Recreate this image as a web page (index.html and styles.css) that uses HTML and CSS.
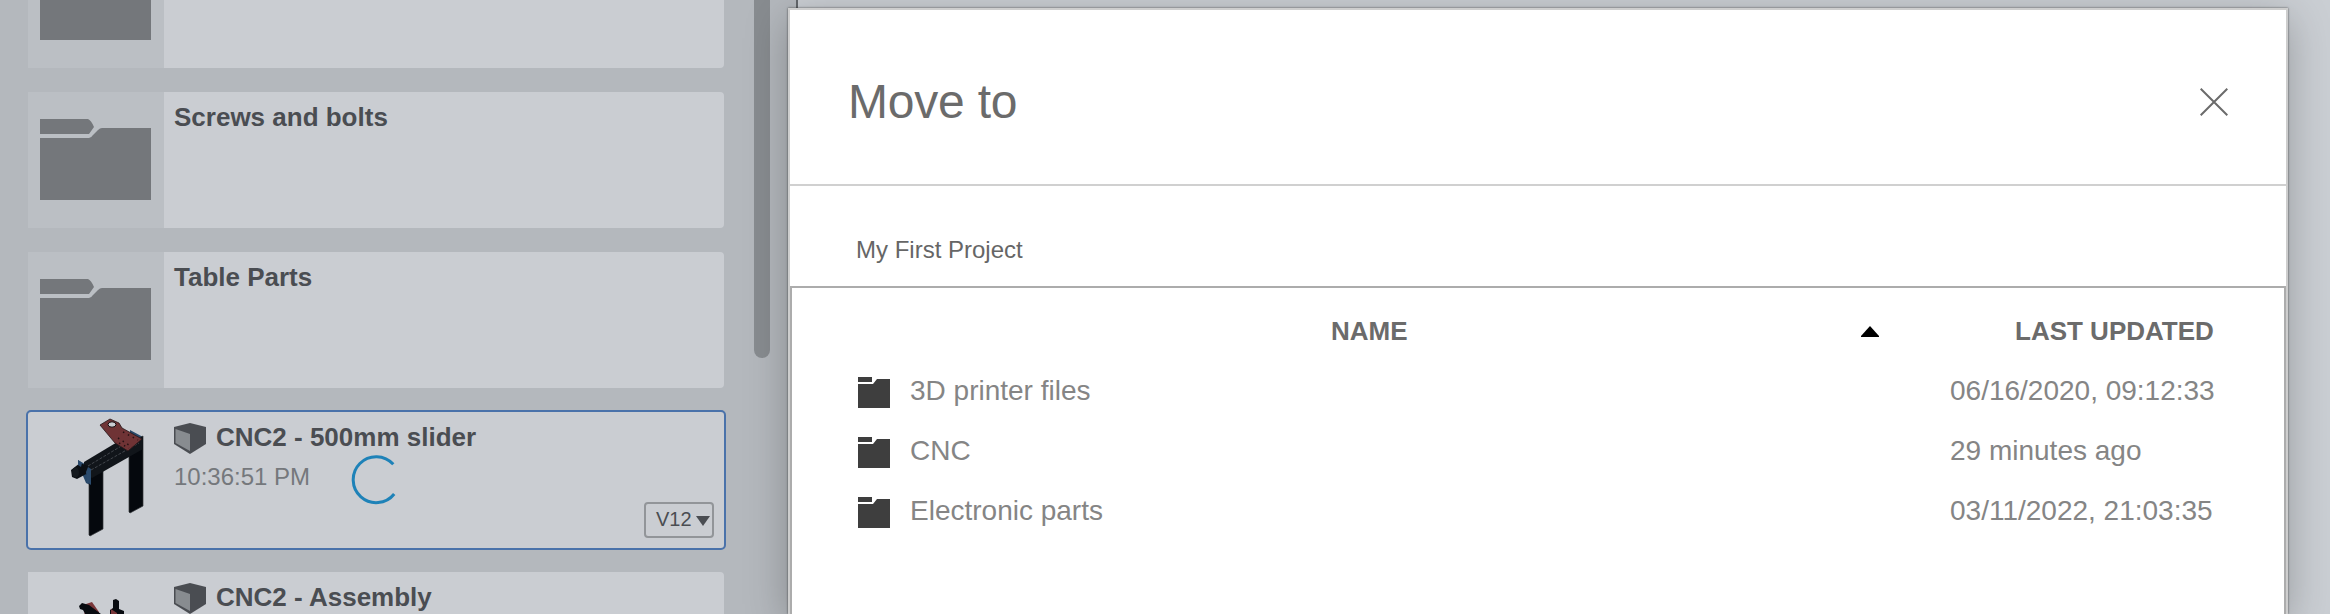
FILE: index.html
```html
<!DOCTYPE html>
<html lang="en">
<head>
<meta charset="utf-8">
<title>Move to</title>
<link rel="stylesheet" href="styles.css">
</head>
<body>
<svg class="defs" width="0" height="0">
  <symbol id="folder" viewBox="0 0 112 83"><path d="M0 1h48q3 1 6 8l-5 7H0zM0 20h49q2 0 4-3l5-5q2-2 4-2h49v72H0z"/></symbol>
  <symbol id="folder-sm" viewBox="0 0 32 32"><path d="M0 1h14v5H0zM0 8h15l4-5h13v29H0z"/></symbol>
  <symbol id="cube" viewBox="0 0 32 31"><path fill="#4a4d52" d="M0 4L16 0l16 4v17L16 31 0 21z"/><path fill="#888c90" d="M1.5 6L16 11v17L1.5 20z"/></symbol>
</svg>
<div class="app">
  <aside class="panel">
    <div class="list">
      <article class="card"><div class="thumb shade"><svg class="folder"><use href="#folder"/></svg></div><div class="info"></div></article>
      <article class="card"><div class="thumb shade"><svg class="folder"><use href="#folder"/></svg></div><div class="info"><h3>Screws and bolts</h3></div></article>
      <article class="card"><div class="thumb shade"><svg class="folder"><use href="#folder"/></svg></div><div class="info"><h3>Table Parts</h3></div></article>
      <article class="card selected">
        <div class="thumb">
          <svg width="136" height="136" viewBox="28 412 136 136">
            <path fill="#284869" d="M130 430l13 7v13l-13-8zM78 460l12 7v18l-4-2-8-19z"/>
            <path fill="#05080d" stroke="#303338" stroke-width=".7" d="M129 443l14-7v70l-13 7-1-1z"/>
            <path fill="#05080d" stroke="#303338" stroke-width=".7" d="M89 466l14-3v66l-13 7-1-1z"/>
            <path fill="#11151a" d="M84 462l35-21 24-3v11l-51 29-8-5z"/>
            <path stroke="#42464c" stroke-dasharray="3 1.5" fill="none" d="M91 470l48-27M88 466l35-21"/>
            <path fill="#0b0f14" d="M71 470l9-7 8 3v7l-11 6-5-2z"/>
            <ellipse cx="75.500" cy="472.500" rx="3.500" ry="5" fill="#14191e"/>
            <path fill="#2b4b6d" d="M78 460l4 3-1 4-3-2zM88 467l3 2v16l-4-3-1-10z"/>
            <path fill="#6f3335" stroke="#241719" stroke-width=".8" d="M100 425l10-6 9 4 3 5 20 11-14 12-13-8-5-6z"/>
            <ellipse cx="112" cy="424.500" rx="4" ry="2.700" fill="#c9cdd2" stroke="#180c0e"/>
            <path stroke="#261315" stroke-width="1.500" stroke-dasharray="1.500 4" d="M123 432l15 8M118 438l14 9M119 443l10 5"/>
          </svg>
        </div>
        <div class="info">
          <h3><svg class="cube"><use href="#cube"/></svg>CNC2 - 500mm slider</h3>
          <div class="meta"><span>10:36:51 PM</span><svg class="spinner" viewBox="0 0 50 50"><path d="M42.300 9.300A23 23 0 1 0 43.200 39"/></svg></div>
          <button class="version">V12<svg width="14" height="10"><path d="M0 0h14L7 10z"/></svg></button>
        </div>
      </article>
      <article class="card">
        <div class="thumb">
          <svg width="136" height="136" viewBox="28 572 136 136">
            <path fill="#7a373a" d="M86 604l6-2 7 10v4H84z"/>
            <path fill="#080b10" d="M79 606l3-3 7 2 12 9v5H88l-5-9-3-1zM113 600l3-1 3 2v8l5 2v7h-14v-8l3-2z"/>
            <path fill="#7a373a" d="M111 609l6 4v5h-6z"/>
          </svg>
        </div>
        <div class="info"><h3><svg class="cube"><use href="#cube"/></svg>CNC2 - Assembly</h3></div>
      </article>
    </div>
    <div class="scrollbar"></div>
  </aside>
  <main class="canvas"></main>
</div>
<section class="dialog" role="dialog">
  <header class="dialog-head"><h1>Move to</h1>
    <svg class="close" viewBox="0 0 28 28"><path d="M.7.700l26.600 26.600M27.300.700L.7 27.300"/></svg>
  </header>
  <div class="crumb">My First Project</div>
  <div class="table">
    <div class="row head"><div class="name">NAME<svg class="sort" width="18" height="11"><path d="M9 0l9 10v1H0v-1z"/></svg></div><div class="date">LAST UPDATED</div></div>
    <div class="row"><div class="file"><svg class="fi"><use href="#folder-sm"/></svg>3D printer files</div><div class="date">06/16/2020, 09:12:33</div></div>
    <div class="row"><div class="file"><svg class="fi"><use href="#folder-sm"/></svg>CNC</div><div class="date">29 minutes ago</div></div>
    <div class="row"><div class="file"><svg class="fi"><use href="#folder-sm"/></svg>Electronic parts</div><div class="date">03/11/2022, 21:03:35</div></div>
  </div>
</section>
</body>
</html>
```
FILE: styles.css
```css
* { box-sizing: border-box; }
html { height: 614px; overflow: hidden; }
body { margin: 0; width: 2330px; height: 614px; overflow: hidden; position: relative; font-family: "Liberation Sans", Arial, sans-serif; }
h1, h3 { margin: 0; }
.defs { position: absolute; }
.app { display: flex; height: 614px; overflow: hidden; background: #caced3; }
.panel { width: 798px; height: 614px; display: flex; background: #b4b8bd; border-right: 2px solid #63676b; overflow: hidden; }
.list { width: 754px; padding-left: 28px; margin-top: -68px; display: flex; flex-direction: column; gap: 24px; }
.card { width: 696px; height: 136px; flex: none; display: flex; background: #cacdd2; border-radius: 0 4px 4px 0; }
.card:last-child { height: 42px; overflow: hidden; border-radius: 0 4px 0 0; }
.card.selected { outline: 2px solid #4a72aa; border-radius: 3px; }
.thumb { width: 136px; height: 136px; flex: none; }
.thumb.shade { background: #bbbfc4; padding: 26px 12px; }
.thumb svg { display: block; }
.folder { width: 112px; height: 83px; fill: #74777b; }
.info { flex: 1; padding: 9px 10px 0; display: flex; flex-direction: column; align-items: flex-start; position: relative; }
.info h3 { display: flex; align-items: center; height: 32px; font-size: 26px; line-height: 32px; color: #4a4d52; white-space: nowrap; }
.cube { width: 32px; height: 31px; margin: 3px 10px 0 0; }
.meta { display: flex; align-items: flex-start; font-size: 24px; line-height: 28px; color: #75787c; padding-top: 10px; }
.spinner { width: 50px; height: 50px; margin: -8px 0 0 41px; fill: none; stroke: #1e82b8; stroke-width: 3; }
.version { position: absolute; right: 10px; bottom: 10px; width: 70px; height: 36px; border: 2px solid #929599; border-radius: 4px; background: none; padding: 0 2px 2px 10px; display: flex; align-items: center; justify-content: space-between; font: 20px "Liberation Sans", Arial, sans-serif; color: #4a4d52; }
.version svg { fill: #4a4d52; margin-top: 4px; }
.scrollbar { width: 16px; height: 358px; background: #888c90; border-radius: 0 0 8px 8px; }
.canvas { flex: 1; }
.dialog { position: absolute; left: 788px; top: 8px; width: 1500px; height: 606px; background: #fff; border: 2px solid #cecece; border-bottom: 0; display: flex; flex-direction: column; box-shadow: 0 0 2px 0 rgba(0,0,0,.6), 0 10px 40px rgba(0,0,0,.26); }
.dialog-head { height: 176px; flex: none; border-bottom: 2px solid #d0d0d0; padding: 10px 58px 0; display: flex; justify-content: space-between; }
.dialog-head h1 { font-size: 48px; line-height: 64px; letter-spacing: -.2px; padding-top: 50px; font-weight: 400; color: #6b6b6b; }
.close { width: 28px; height: 28px; margin-top: 68px; fill: none; stroke: #6b6b6b; stroke-width: 2; }
.crumb { height: 100px; flex: none; padding: 48px 0 0 66px; font-size: 24px; line-height: 32px; color: #666; }
.table { flex: 1; border: 2px solid #acacac; border-bottom: 0; padding: 13px 66px 0; }
.row { height: 60px; display: flex; align-items: center; font-size: 28px; color: #858585; white-space: nowrap; }
.file, .name { width: 1092px; display: flex; align-items: center; flex: none; }
.fi { width: 32px; height: 32px; fill: #3e3e3e; margin: 2px 20px 0 0; }
.head { font-size: 26px; font-weight: 700; color: #6b6b6b; }
.name { padding-left: 473px; justify-content: space-between; padding-right: 71px; }
.sort { fill: #000; }
.head .date { padding-left: 65px; }
```
